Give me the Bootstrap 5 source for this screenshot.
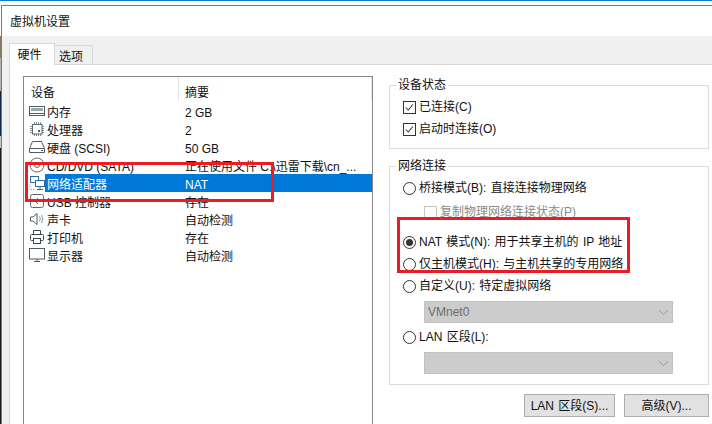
<!DOCTYPE html>
<html lang="zh-CN">
<head>
<meta charset="utf-8">
<title>虚拟机设置</title>
<link href="https://cdn.jsdelivr.net/npm/bootstrap@5.3.0/dist/css/bootstrap.min.css" rel="stylesheet">
<style>
html,body{margin:0;height:424px;overflow:hidden;background:#fff}
body{font:12px/18px "Liberation Sans","Noto Sans CJK SC",sans-serif;color:#111;position:relative}
.topline{height:1px;background:#0f7fd0}
.desk{height:4px;background:#fff}
.shell{height:419px;margin-left:1px;border-top:1px solid #7a7a7a;border-left:1px solid #7a7a7a;overflow:hidden;background:#fff}
.titlebar{height:30px;padding:7px 0 0 8px;font-size:12px;line-height:18px}
.work{height:388px;background:#f0f0f0;padding:7px 0 0 7px}
.tabrow{height:21px;align-items:flex-end;position:relative;z-index:1}
.vtab{border:1px solid #d9d9d9;border-bottom:0;background:#f0f0f0;height:19px;line-height:22px;width:39px;padding-right:5px;text-align:center;margin-left:-1px}
.vtab.on{background:#fff;height:22px;width:46px;margin-left:0;margin-bottom:-1px;position:relative;z-index:1;padding-right:5px;line-height:23px}
.sheet{background:#fff;border-top:1px solid #d9d9d9;border-left:1px solid #d9d9d9;height:372px;padding:11px 3px 0 13px;gap:16px}
.devbox{width:350px;height:360px;border:1px solid #828790;border-bottom:0;flex:none}
.devhead{height:25px;padding-left:7px;line-height:20px}
.devhead span{display:block;height:24px;padding-top:6px;border-right:1px solid #e5e5e5}
.c1{width:148px;flex:none}
.c2{flex:1 1 auto;padding-left:6px;white-space:nowrap}
.devrow{height:18px;line-height:22px;align-items:center;padding-left:5px}
.devrow svg{flex:none}
.devrow .lbl{width:134px;flex:none;padding-left:2px;height:18px}
.devrow .c2{padding-left:6px;height:18px}
.devrow.sel .lbl,.devrow.sel .c2{background:#0078d7;color:#fff}
.sidecol{width:320px;flex:none;padding-top:2px}
.grp{border:1px solid #dcdcdc;margin:0;padding:0;min-width:0;word-spacing:1px}
.grp legend{float:none;width:auto;font-size:12px;line-height:14px;margin:0 0 0 -7px;padding:0 2px}
.g1{height:71px;padding:4px 0 0 13px}
.g2{height:226px;padding:4px 0 0 13px;margin-top:10px}
.opt{height:22px;align-items:center;gap:3px;white-space:nowrap}
.gap-a{margin-top:2px}
.gap-b{margin-top:8px}
.box{width:13px;height:13px;border:1px solid #333;background:#fff;flex:none;display:block}
.box.off{border-color:#c4c4c4;margin-left:21px}
.dot{width:13px;height:13px;border:1px solid #333;border-radius:50%;background:#fff;flex:none;position:relative}
.dot.on::after{content:"";position:absolute;left:2px;top:2px;width:7px;height:7px;border-radius:50%;background:#333}
.muted{color:#8a8a8a}
.fakesel{height:22px;width:249px;margin:4px 0 3px 21px;background:#ccc;border:1px solid #c2c2c2;color:#6d6d6d;padding-left:3px;line-height:20px;position:relative}
.fakesel svg{position:absolute;right:3px;top:7px}
.btnrow{gap:9px;justify-content:flex-end;margin-top:9px}
.wbtn{height:23px;border:1px solid #adadad;background:#e1e1e1;color:#111;font-size:12px;line-height:20px;padding:0;border-radius:0;box-shadow:inset 0 0 0 1px #e1e1e1;word-spacing:1px}
.w1{width:91px}.w2{width:85px}
.mark1,.mark2{position:absolute;border:3px solid #ed1c24;pointer-events:none}
.mark1{left:25px;top:162px;width:249px;height:40px}
.mark2{left:397px;top:217px;width:233px;height:56px}
.sliver{position:absolute;left:0;top:36px;width:1px;height:388px;background:linear-gradient(#8a7a60 0 22px,#b0b0b0 22px 55px,#0f2a44 55px 100px,#c8c8c8 100px 112px,#1a1a1a 112px 388px)}
</style>
</head>
<body>
<div class="topline"></div>
<div class="desk"></div>
<div class="shell">
  <div class="titlebar">虚拟机设置</div>
  <div class="work">
    <div class="d-flex tabrow">
      <div class="vtab on">硬件</div>
      <div class="vtab">选项</div>
    </div>
    <div class="sheet d-flex">
      <div class="devbox">
        <div class="devhead d-flex"><span class="c1">设备</span><span class="c2">摘要</span></div>
        <div class="devrow d-flex">
          <svg width="16" height="16" viewBox="0 0 16 16" fill="none"><rect x=".5" y="3.500" width="15" height="9" fill="#fff" stroke="#4f5d66"/><rect x="2" y="5" width="12" height="3" fill="#9aa7b0"/><path d="M1 10.500h14" stroke="#4f5d66"/></svg>
          <span class="lbl">内存</span><span class="c2">2 GB</span>
        </div>
        <div class="devrow d-flex">
          <svg width="16" height="16" viewBox="0 0 16 16" fill="none"><path d="M1 5.500h14M1 7.500h14M1 9.500h14M1 11.500h14M5.500 1v14M7.500 1v14M9.500 1v14M11.500 1v14" stroke="#7f8d97"/><rect x="3.500" y="3.500" width="9.500" height="9.500" fill="#fff" stroke="#5c6870"/><rect x="9" y="9" width="2" height="2" fill="#4f5d66"/></svg>
          <span class="lbl">处理器</span><span class="c2">2</span>
        </div>
        <div class="devrow d-flex">
          <svg width="16" height="16" viewBox="0 0 16 16" fill="none"><path d="M3.500 2.500h9l3 7v4H.5v-4z" fill="#fff" stroke="#4f5d66"/><path d="M1 9.500h14M12 11.500h2" stroke="#4f5d66"/></svg>
          <span class="lbl">硬盘 (SCSI)</span><span class="c2">50 GB</span>
        </div>
        <div class="devrow d-flex">
          <svg width="16" height="16" viewBox="0 0 16 16" fill="none"><circle cx="8" cy="8" r="7" fill="#fff" stroke="#5c6870"/><circle cx="8" cy="8" r="2.500" stroke="#5c6870"/></svg>
          <span class="lbl">CD/DVD (SATA)</span><span class="c2">正在使用文件 C:\迅雷下载\cn_...</span>
        </div>
        <div class="devrow sel d-flex">
          <svg width="16" height="16" viewBox="0 0 16 16" fill="none"><rect x="1.500" y="1.500" width="8" height="6" fill="#fff" stroke="#2f6f96"/><rect x="6.500" y="5.500" width="9" height="6" fill="#fff" stroke="#2f6f96"/><path d="M11 12v2M8 14.500h6" stroke="#2f6f96"/><path d="M1 9.500v5h5" stroke="#5fa8d3" stroke-dasharray="1 1"/></svg>
          <span class="lbl">网络适配器</span><span class="c2">NAT</span>
        </div>
        <div class="devrow d-flex">
          <svg width="16" height="16" viewBox="0 0 16 16" fill="none"><rect x="1.500" y="1.500" width="13" height="13" rx="2" fill="#fff" stroke="#5c6870"/><path d="M9 5 6 8l3 3" stroke="#5c6870"/></svg>
          <span class="lbl">USB 控制器</span><span class="c2">存在</span>
        </div>
        <div class="devrow d-flex">
          <svg width="16" height="16" viewBox="0 0 16 16" fill="none"><path d="M1.500 6v4h2.500l4 3.500v-11L4 6z" fill="#fff" stroke="#4f5d66"/><path d="M10.500 5.500q1.500 2.500 0 5M12.500 4q2.500 4 0 8" stroke="#8b99a3"/></svg>
          <span class="lbl">声卡</span><span class="c2">自动检测</span>
        </div>
        <div class="devrow d-flex">
          <svg width="16" height="16" viewBox="0 0 16 16" fill="none"><path d="M4.500 5V1.500h7V5" fill="#fff" stroke="#3d484f"/><rect x="1.500" y="5.500" width="13" height="6" rx="1" fill="#fff" stroke="#3d484f"/><rect x="4.500" y="9.500" width="7" height="5" fill="#fff" stroke="#3d484f"/></svg>
          <span class="lbl">打印机</span><span class="c2">存在</span>
        </div>
        <div class="devrow d-flex">
          <svg width="16" height="16" viewBox="0 0 16 16" fill="none"><rect x=".5" y="1.500" width="15" height="10.500" fill="#fff" stroke="#4f5d66"/><path d="M5 14.500h6M8 12v2" stroke="#4f5d66"/></svg>
          <span class="lbl">显示器</span><span class="c2">自动检测</span>
        </div>
      </div>
      <div class="sidecol">
        <fieldset class="grp g1">
          <legend>设备状态</legend>
          <div class="opt d-flex"><svg class="box" viewBox="0 0 13 13" fill="none"><path d="M2 6.500 5 9.500 10.500 3" stroke="#333" stroke-width="1.200"/></svg><span>已连接(C)</span></div>
          <div class="opt d-flex"><svg class="box" viewBox="0 0 13 13" fill="none"><path d="M2 6.500 5 9.500 10.500 3" stroke="#333" stroke-width="1.200"/></svg><span>启动时连接(O)</span></div>
        </fieldset>
        <fieldset class="grp g2">
          <legend>网络连接</legend>
          <div class="opt d-flex"><i class="dot"></i><span>桥接模式(B): 直接连接物理网络</span></div>
          <div class="opt d-flex muted gap-a"><i class="box off"></i><span>复制物理网络连接状态(P)</span></div>
          <div class="opt d-flex gap-b"><i class="dot on"></i><span>NAT 模式(N): 用于共享主机的 IP 地址</span></div>
          <div class="opt d-flex"><i class="dot"></i><span>仅主机模式(H): 与主机共享的专用网络</span></div>
          <div class="opt d-flex"><i class="dot"></i><span>自定义(U): 特定虚拟网络</span></div>
          <div class="fakesel">VMnet0<svg width="11" height="7" viewBox="0 0 11 7" fill="none"><path d="M1 1l4.500 4.500L10 1" stroke="#999"/></svg></div>
          <div class="opt d-flex"><i class="dot"></i><span>LAN 区段(L):</span></div>
          <div class="fakesel"><svg width="11" height="7" viewBox="0 0 11 7" fill="none"><path d="M1 1l4.500 4.500L10 1" stroke="#999"/></svg></div>
        </fieldset>
        <div class="btnrow d-flex">
          <button type="button" class="btn wbtn w1">LAN 区段(S)...</button>
          <button type="button" class="btn wbtn w2">高级(V)...</button>
        </div>
      </div>
    </div>
  </div>
</div>
<div class="sliver"></div>
<div class="mark1"></div>
<div class="mark2"></div>
</body>
</html>
